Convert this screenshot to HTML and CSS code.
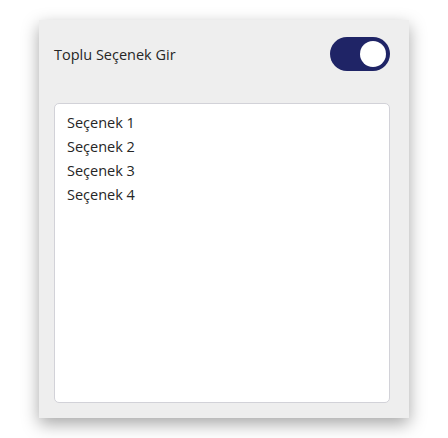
FILE: index.html
```html
<!DOCTYPE html>
<html>
<head>
<meta charset="utf-8">
<link rel="stylesheet" href="styles.css">
</head>
<body>
<div class="panel">
  <div class="header">
    <span class="label">Toplu Seçenek Gir</span>
    <span class="toggle"><span class="knob"></span></span>
  </div>
  <div class="area">
    <div class="line">Seçenek 1</div>
    <div class="line">Seçenek 2</div>
    <div class="line">Seçenek 3</div>
    <div class="line">Seçenek 4</div>
  </div>
</div>
</body>
</html>
```
FILE: styles.css
```css
html, body {
  margin: 0;
  padding: 0;
  background: #ffffff;
}
body {
  width: 448px;
  height: 438px;
  font-family: "Open Sans", "Noto Sans", sans-serif;
  color: #333;
}
.panel {
  box-sizing: border-box;
  margin: 20px 0 0 39px;
  width: 370px;
  height: 398px;
  background: #eeeeee;
  box-shadow: 0 6px 16px rgba(0, 0, 0, 0.35);
  padding: 17px 19px 15px 15px;
  display: flex;
  flex-direction: column;
}
.header {
  display: flex;
  align-items: center;
  justify-content: space-between;
  height: 34px;
}
.label {
  font-size: 14.5px;
  color: #262626;
  margin-top: 1px;
}
.toggle {
  width: 60px;
  height: 34px;
  border-radius: 17px;
  background: #1f2466;
  display: flex;
  align-items: center;
  justify-content: flex-end;
  padding-right: 4px;
  box-sizing: border-box;
}
.knob {
  width: 26px;
  height: 26px;
  border-radius: 50%;
  background: #ffffff;
}
.area {
  margin-top: 32px;
  flex: 1;
  background: #ffffff;
  border: 1px solid #d2d2d8;
  border-radius: 5px;
  padding: 7px 12px;
  font-size: 14.5px;
  line-height: 24px;
  color: #262626;
}
```
